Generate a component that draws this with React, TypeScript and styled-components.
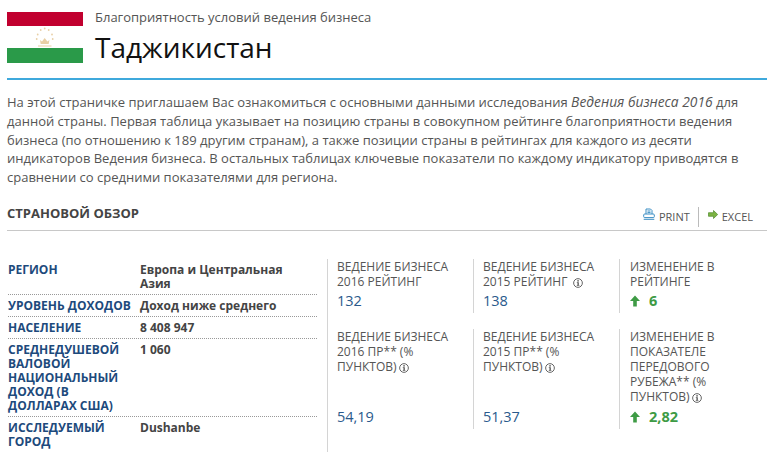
import styled, { createGlobalStyle } from 'styled-components';

const GlobalStyle = createGlobalStyle`
	html, body {
		margin: 0;
		padding: 0;
		background: #fff;
		overflow: hidden;
	}
	body {
		font-family: "Open Sans", "Liberation Sans", sans-serif;
		color: #444;
	}
`;

const Page = styled.div`
	width: 770px;
	height: 460px;
	overflow: hidden;
	padding: 12px 3px 0 7px;
	box-sizing: border-box;
`;

const Header = styled.header`
	display: flex;
	gap: 12px;
	height: 66px;
	border-bottom: 2px solid #3fa9dc;
`;

const Flag = styled.svg`
	width: 76px;
	height: 51px;
	flex: none;
`;

const Titles = styled.div`
	display: flex;
	flex-direction: column;
`;

const Subtitle = styled.div`
	font-size: 13px;
	line-height: 10px;
	color: #555;
`;

const Title = styled.h1`
	margin: 7px 0 0;
	font-size: 28px;
	line-height: 36px;
	font-weight: 400;
	color: #111;
`;

const Intro = styled.p`
	margin: 13px 0 0;
	font-size: 13px;
	line-height: 18.75px;
	color: #555;

	em {
		font-size: 13.8px;
		line-height: 1;
	}
`;

const SectionBar = styled.div`
	display: flex;
	justify-content: space-between;
	align-items: flex-end;
	height: 35px;
	margin-top: 9px;
	border-bottom: 1px solid #c8c8c8;
	padding-bottom: 3px;
	box-sizing: border-box;
`;

const SectionTitle = styled.h2`
	margin: 0 0 6px;
	font-size: 13px;
	line-height: 16px;
	font-weight: 700;
	color: #444;
`;

const Actions = styled.div`
	display: flex;
	align-items: center;
	margin-right: 14px;
`;

const Action = styled.span<{ $divided?: boolean }>`
	display: flex;
	align-items: center;
	gap: 4px;
	height: 20px;
	font-size: 11px;
	color: #555;
	${props => props.$divided && 'border-left: 1px solid #bbb; margin-left: 8px; padding-left: 9px;'}

	svg {
		margin-bottom: 5px;
	}
`;

const Overview = styled.div`
	display: flex;
	margin-top: 28px;
`;

const Facts = styled.div`
	width: 309px;
	margin-left: 1px;
	flex: none;
`;

const FactRow = styled.div<{ $last?: boolean }>`
	display: grid;
	grid-template-columns: 132px 1fr;
	padding: 4px 0 3px;
	border-bottom: ${props => (props.$last ? 'none' : '1px dotted #999')};
`;

const FactLabel = styled.div`
	font-size: 12px;
	line-height: 14px;
	font-weight: 700;
	color: #1d4a7c;
`;

const FactValue = styled.div`
	font-size: 12px;
	line-height: 14px;
	font-weight: 700;
	color: #444;
	padding-right: 20px;
`;

const Metrics = styled.div`
	display: grid;
	grid-template-columns: 145px 146px 148px;
	grid-template-rows: 54px 100px;
	row-gap: 16px;
	align-content: start;
	border-left: 1px solid #d4d4d4;
	margin-left: 10px;
`;

const Metric = styled.div`
	display: flex;
	flex-direction: column;
	justify-content: space-between;
	padding: 0 0 3px 9px;
	border-left: 1px solid #d4d4d4;

	&:nth-child(3n + 1) {
		border-left: none;
	}

	&:nth-child(3n) {
		padding-left: 10px;
	}
`;

const MetricLabel = styled.div`
	font-size: 12px;
	line-height: 15px;
	color: #555;
`;

const MetricValue = styled.div`
	font-size: 14.5px;
	line-height: 18px;
	color: #2a5a8c;
`;

const Change = styled.div`
	display: flex;
	align-items: center;
	gap: 9px;
	font-size: 14.5px;
	line-height: 18px;
	font-weight: 700;
	color: #3e9b45;
`;

const InfoIcon = styled.svg`
	width: 10px;
	height: 10px;
	vertical-align: -2px;
	margin-left: 2px;
`;

const Info = () => (
	<InfoIcon viewBox="0 0 11 11">
		<circle cx="5.5" cy="5.5" r="4.8" fill="none" stroke="#555" strokeWidth="1" />
		<rect x="4.7" y="2.4" width="1.7" height="1.5" fill="#555" />
		<path d="M4.2 4.7h2.2v2.9h.6v.9H4.2v-.9h.7V5.6h-.7z" fill="#555" />
	</InfoIcon>
);

const UpArrow = () => (
	<svg width="10" height="12" viewBox="0 0 10 12">
		<path d="M5 0.5 10 6H6.8v5.5H3.2V6H0z" fill="#3e9b45" />
	</svg>
);

const PrinterIcon = () => (
	<svg width="12" height="12" viewBox="0 0 12 12" fill="none" stroke="#3b8ec4" strokeWidth="1">
		<path d="M3 6V1h4.5L9 2.5V6" />
		<path d="M4.5 3h3M4.5 4.6h3" />
		<rect x="0.7" y="6" width="10.6" height="3.6" rx="1" />
		<path d="M0.7 11.3h10.6" />
	</svg>
);

const ExcelIcon = () => (
	<svg width="10" height="9" viewBox="0 0 10 9">
		<path d="M5.5 0.5 9.7 4.5 5.5 8.5V6.3H0.5V2.7h5z" fill="#7cb342" stroke="#4f8a2c" strokeWidth="0.7" />
	</svg>
);

const facts = [
	{ label: 'РЕГИОН', value: 'Европа и Центральная Азия' },
	{ label: 'УРОВЕНЬ ДОХОДОВ', value: 'Доход ниже среднего' },
	{ label: 'НАСЕЛЕНИЕ', value: '8 408 947' },
	{ label: 'СРЕДНЕДУШЕВОЙ ВАЛОВОЙ НАЦИОНАЛЬНЫЙ ДОХОД (В ДОЛЛАРАХ США)', value: '1 060' },
	{ label: 'ИССЛЕДУЕМЫЙ ГОРОД', value: 'Dushanbe' }
];

export default function App() {
	return (
		<Page>
			<GlobalStyle />
			<Header>
				<Flag viewBox="0 0 76 51">
					<rect width="76" height="14" fill="#c1002f" />
					<rect y="14" width="76" height="22" fill="#fff" />
					<rect y="36" width="76" height="15" fill="#2a9a49" />
					<g fill="#e8cfa5">
						<circle cx="37.7" cy="16.5" r="0.9" />
						<circle cx="33.7" cy="18" r="0.9" />
						<circle cx="41.7" cy="18" r="0.9" />
						<circle cx="30.7" cy="22.5" r="0.9" />
						<circle cx="45" cy="22.5" r="0.9" />
						<circle cx="29.7" cy="27" r="0.9" />
						<circle cx="45.7" cy="27" r="0.9" />
						<path d="M33 28l2 1.5 2.7-3.5 2.7 3.5 2-1.5-.7 4h-8z" />
						<path d="M31 33.5h13.5v1H31z" />
					</g>
				</Flag>
				<Titles>
					<Subtitle>Благоприятность условий ведения бизнеса</Subtitle>
					<Title>Таджикистан</Title>
				</Titles>
			</Header>
			<Intro>
				На этой страничке приглашаем Вас ознакомиться с основными данными исследования <em>Ведения бизнеса 2016</em> для
				данной страны. Первая таблица указывает на позицию страны в совокупном рейтинге благоприятности ведения
				бизнеса (по отношению к 189 другим странам), а также позиции страны в рейтингах для каждого из десяти
				индикаторов Ведения бизнеса. В остальных таблицах ключевые показатели по каждому индикатору приводятся в
				сравнении со средними показателями для региона.
			</Intro>
			<SectionBar>
				<SectionTitle>СТРАНОВОЙ ОБЗОР</SectionTitle>
				<Actions>
					<Action>
						<PrinterIcon />
						PRINT
					</Action>
					<Action $divided>
						<ExcelIcon />
						EXCEL
					</Action>
				</Actions>
			</SectionBar>
			<Overview>
				<Facts>
					{facts.map((fact, index) => (
						<FactRow key={fact.label} $last={index === facts.length - 1}>
							<FactLabel>{fact.label}</FactLabel>
							<FactValue>{fact.value}</FactValue>
						</FactRow>
					))}
				</Facts>
				<Metrics>
					<Metric>
						<MetricLabel>ВЕДЕНИЕ БИЗНЕСА 2016 РЕЙТИНГ</MetricLabel>
						<MetricValue>132</MetricValue>
					</Metric>
					<Metric>
						<MetricLabel>
							ВЕДЕНИЕ БИЗНЕСА 2015 РЕЙТИНГ <Info />
						</MetricLabel>
						<MetricValue>138</MetricValue>
					</Metric>
					<Metric>
						<MetricLabel>ИЗМЕНЕНИЕ В РЕЙТИНГЕ</MetricLabel>
						<Change>
							<UpArrow />6
						</Change>
					</Metric>
					<Metric>
						<MetricLabel>
							ВЕДЕНИЕ БИЗНЕСА 2016 ПР** (% ПУНКТОВ)
							<Info />
						</MetricLabel>
						<MetricValue>54,19</MetricValue>
					</Metric>
					<Metric>
						<MetricLabel>
							ВЕДЕНИЕ БИЗНЕСА 2015 ПР** (% ПУНКТОВ)
							<Info />
						</MetricLabel>
						<MetricValue>51,37</MetricValue>
					</Metric>
					<Metric>
						<MetricLabel>
							ИЗМЕНЕНИЕ В ПОКАЗАТЕЛЕ ПЕРЕДОВОГО РУБЕЖА** (% ПУНКТОВ)
							<Info />
						</MetricLabel>
						<Change>
							<UpArrow />
							2,82
						</Change>
					</Metric>
				</Metrics>
			</Overview>
		</Page>
	);
}
